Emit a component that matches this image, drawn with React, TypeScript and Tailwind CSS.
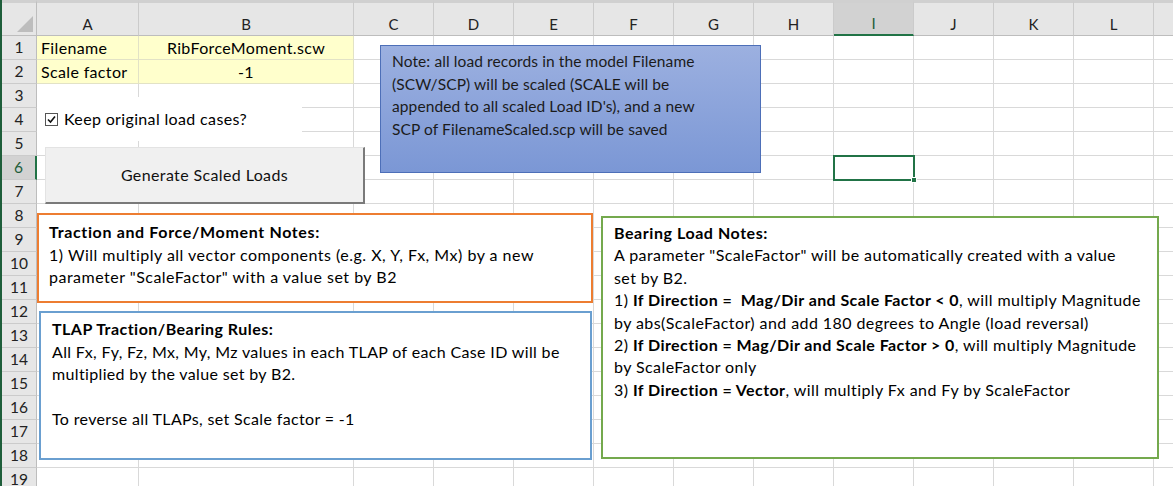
import React from 'react';

const cols = ['A', 'B', 'C', 'D', 'E', 'F', 'G', 'H', 'I', 'J', 'K', 'L', 'M'];
const rows = Array.from({ length: 19 }, (_, i) => i + 1);

const cellText: Record<string, { text: string; align: 'left' | 'center' }> = {
  A1: { text: 'Filename', align: 'left' },
  B1: { text: 'RibForceMoment.scw', align: 'center' },
  A2: { text: 'Scale factor', align: 'left' },
  B2: { text: '-1', align: 'center' },
};

const yellow = ['A1', 'B1', 'A2', 'B2'];

const Sheet: React.FC = () => {
  return (
    <div className="grid grid-cols-[35px_102px_215px_repeat(11,80px)] grid-rows-[36px_repeat(19,24px)]">
      {/* select-all corner */}
      <div className="relative bg-[#e6e6e6] border-t-[3px] border-t-[#d0d0d0] border-r border-b border-[#bdbdbd]">
        <svg className="absolute right-[3px] bottom-[3px]" width="16" height="16" viewBox="0 0 16 16">
          <polygon points="16,0 16,16 0,16" fill="#bdbdbd" />
        </svg>
      </div>
      {cols.map((c) => (
        <div
          key={c}
          className={`flex items-center justify-center pt-[10px] text-[15px] border-t-[3px] border-t-[#d0d0d0] border-r border-[#cbcbcb] ${
            c === 'I'
              ? 'bg-[#d2d2d2] border-b-2 border-b-[#217346] text-[#1e5e3a]'
              : 'bg-[#e6e6e6] border-b border-b-[#bdbdbd] text-[#222]'
          }`}
        >
          {c === 'M' ? '' : c}
        </div>
      ))}
      {rows.map((r) => (
        <React.Fragment key={r}>
          <div
            className={`flex items-center justify-center text-[15.5px] border-b border-[#cbcbcb] ${
              r === 6
                ? 'bg-[#d2d2d2] border-r-2 border-r-[#217346] text-[#1e5e3a]'
                : 'bg-[#e6e6e6] border-r border-r-[#bdbdbd] text-[#222]'
            }`}
          >
            {r}
          </div>
          {cols.map((c) => {
            const id = `${c}${r}`;
            const t = cellText[id];
            return (
              <div
                key={id}
                className={`flex items-center whitespace-nowrap px-[4px] text-[16px] tracking-[0.35px] text-black border-r border-b ${
                  yellow.includes(id) ? 'bg-[#ffffcc] border-[#e2e2c6]' : 'bg-white border-[#d9d9d9]'
                } ${t?.align === 'center' ? 'justify-center' : 'justify-start'}`}
              >
                {t?.text}
              </div>
            );
          })}
        </React.Fragment>
      ))}
    </div>
  );
};

export default function App() {
  return (
    <div className="relative w-[1173px] h-[486px] overflow-hidden bg-white font-['Lato',sans-serif] border-l-2 border-[#1e5e3a]">
      <Sheet />

      {/* Checkbox form control */}
      <div className="absolute left-[35px] top-[97px] w-[265px] h-[44px] bg-white flex items-center gap-[6px] pl-[8px] text-[16px] tracking-[0.35px] text-black">
        <div className="w-[13px] h-[13px] border border-[#555] bg-white flex items-center justify-center">
          <svg width="9" height="9" viewBox="0 0 9 9">
            <path d="M1 4.5 L3.5 7 L8 1.5" stroke="#111" strokeWidth="1.6" fill="none" />
          </svg>
        </div>
        <span className="whitespace-nowrap">Keep original load cases?</span>
      </div>

      {/* Button */}
      <div className="absolute left-[43px] top-[147px] w-[320px] h-[57px] bg-[#f0f0f0] border-t border-l border-t-[#e3e3e3] border-l-[#e3e3e3] border-r-2 border-b-2 border-r-[#7a7a7a] border-b-[#7a7a7a] flex items-center justify-center text-[16px] tracking-[0.38px] text-[#111]">
        Generate Scaled Loads
      </div>

      {/* Note box */}
      <div className="absolute left-[378px] top-[45px] w-[381px] h-[128px] bg-gradient-to-b from-[#9cb0e0] to-[#7b97d5] border border-[#4d6fb8] pl-[11px] pt-[4px] text-[15.5px] tracking-[0.1px] leading-[22.7px] text-[#1b1b1b]">
        <div className="whitespace-nowrap">Note: all load records in the model Filename</div>
        <div className="whitespace-nowrap">(SCW/SCP) will be scaled (SCALE will be</div>
        <div className="whitespace-nowrap">appended to all scaled Load ID's), and a new</div>
        <div className="whitespace-nowrap">SCP of FilenameScaled.scp will be saved</div>
      </div>

      {/* Selected cell I6 */}
      <div className="absolute left-[831px] top-[155px] w-[82px] h-[26px] border-2 border-[#217346]">
        <div className="absolute -right-[4px] -bottom-[4px] w-[6px] h-[6px] bg-[#217346] border border-white" />
      </div>

      {/* Traction notes */}
      <div className="absolute left-[35px] top-[213px] w-[556px] h-[90px] bg-white border-2 border-[#ed7d31] pl-[10px] pt-[6px] text-[16px] tracking-[0.49px] leading-[22.5px] text-black">
        <div className="whitespace-nowrap font-bold tracking-[0.65px]">Traction and Force/Moment Notes:</div>
        <div className="whitespace-nowrap">1) Will multiply all vector components (e.g. X, Y, Fx, Mx) by a new</div>
        <div className="whitespace-nowrap">parameter "ScaleFactor" with a value set by B2</div>
      </div>

      {/* TLAP rules */}
      <div className="absolute left-[37px] top-[311px] w-[553px] h-[149px] bg-white border-2 border-[#6a9fd0] pl-[11px] pt-[5px] text-[16px] tracking-[0.35px] leading-[22.5px] text-black">
        <div className="whitespace-nowrap font-bold tracking-[0.46px]">TLAP Traction/Bearing Rules:</div>
        <div className="whitespace-nowrap">All Fx, Fy, Fz, Mx, My, Mz values in each TLAP of each Case ID will be</div>
        <div className="whitespace-nowrap">multiplied by the value set by B2.</div>
        <div className="h-[22.5px]" />
        <div className="whitespace-nowrap">To reverse all TLAPs, set Scale factor = -1</div>
      </div>

      {/* Bearing notes */}
      <div className="absolute left-[599px] top-[216px] w-[558px] h-[243px] bg-white border-2 border-[#74a94d] pl-[11px] pt-[4px] text-[16px] tracking-[0.42px] leading-[22.4px] text-black">
        <div className="whitespace-nowrap font-bold tracking-[0.56px]">Bearing Load Notes:</div>
        <div className="whitespace-nowrap">A parameter "ScaleFactor" will be automatically created with a value</div>
        <div className="whitespace-nowrap">set by B2.</div>
        <div className="whitespace-nowrap">
          1) <b>If Direction =&nbsp; Mag/Dir and Scale Factor &lt; 0</b>, will multiply Magnitude
        </div>
        <div className="whitespace-nowrap">by abs(ScaleFactor) and add 180 degrees to Angle (load reversal)</div>
        <div className="whitespace-nowrap">
          2) <b>If Direction = Mag/Dir and Scale Factor &gt; 0</b>, will multiply Magnitude
        </div>
        <div className="whitespace-nowrap">by ScaleFactor only</div>
        <div className="whitespace-nowrap">
          3) <b>If Direction = Vector</b>, will multiply Fx and Fy by ScaleFactor
        </div>
      </div>
    </div>
  );
}
